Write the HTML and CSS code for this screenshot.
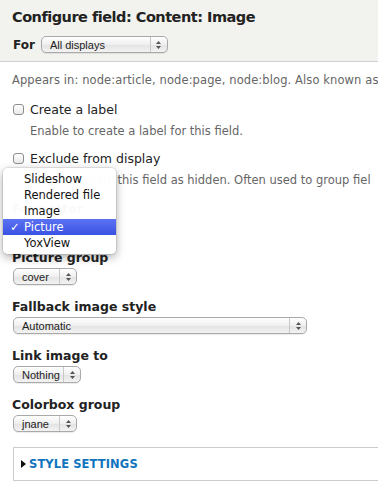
FILE: index.html
```html
<!DOCTYPE html>
<html>
<head>
<meta charset="utf-8">
<link rel="stylesheet" href="styles.css">
</head>
<body>
<div class="header">
  <h1 class="title">Configure field: Content: Image</h1>
  <div class="for-row">
    <span class="for-label">For</span>
    <div class="select sel-for"><span class="sel-text">All displays</span><span class="sel-arrows"><svg width="7" height="10" viewBox="0 0 7 10"><path d="M3.5 1 L6 4 H1 Z M3.5 9 L6 6 H1 Z" fill="#555"/></svg></span></div>
  </div>
</div>
<div class="content">
  <p class="appears">Appears in: node:article, node:page, node:blog. Also known as</p>
  <div class="check-item">
    <div class="check-row"><span class="checkbox"></span><span class="check-label">Create a label</span></div>
    <div class="desc">Enable to create a label for this field.</div>
  </div>
  <div class="check-item">
    <div class="check-row"><span class="checkbox"></span><span class="check-label">Exclude from display</span></div>
    <div class="desc">Check to mark this field as hidden. Often used to group fiel</div>
  </div>
  <div class="form-item first">
    <div class="label">Formatter</div>
    <div class="select sel-fmt"><span class="sel-text">Picture</span><span class="sel-arrows"><svg width="7" height="10" viewBox="0 0 7 10"><path d="M3.5 1 L6 4 H1 Z M3.5 9 L6 6 H1 Z" fill="#555"/></svg></span></div>
  </div>
  <div class="form-item">
    <div class="label">Picture group</div>
    <div class="select sel-cover"><span class="sel-text">cover</span><span class="sel-arrows"><svg width="7" height="10" viewBox="0 0 7 10"><path d="M3.5 1 L6 4 H1 Z M3.5 9 L6 6 H1 Z" fill="#555"/></svg></span></div>
  </div>
  <div class="form-item">
    <div class="label">Fallback image style</div>
    <div class="select sel-wide"><span class="sel-text">Automatic</span><span class="sel-arrows"><svg width="7" height="10" viewBox="0 0 7 10"><path d="M3.5 1 L6 4 H1 Z M3.5 9 L6 6 H1 Z" fill="#555"/></svg></span></div>
  </div>
  <div class="form-item">
    <div class="label">Link image to</div>
    <div class="select sel-nothing"><span class="sel-text">Nothing</span><span class="sel-arrows"><svg width="7" height="10" viewBox="0 0 7 10"><path d="M3.5 1 L6 4 H1 Z M3.5 9 L6 6 H1 Z" fill="#555"/></svg></span></div>
  </div>
  <div class="form-item">
    <div class="label">Colorbox group</div>
    <div class="select sel-cover"><span class="sel-text">jnane</span><span class="sel-arrows"><svg width="7" height="10" viewBox="0 0 7 10"><path d="M3.5 1 L6 4 H1 Z M3.5 9 L6 6 H1 Z" fill="#555"/></svg></span></div>
  </div>
  <div class="fieldset">
    <svg class="tri" width="5" height="8" viewBox="0 0 5 8"><path d="M0 0 L5 4 L0 8 Z" fill="#111"/></svg>
    <span class="fs-title">STYLE SETTINGS</span>
  </div>
  <ul class="popup">
    <li>Slideshow</li>
    <li>Rendered file</li>
    <li>Image</li>
    <li class="selected"><span class="check">✓</span>Picture</li>
    <li>YoxView</li>
  </ul>
</div>
</body>
</html>
```
FILE: styles.css
```css
html, body {
  margin: 0;
  padding: 0;
  background: #fff;
  font-family: "DejaVu Sans", "Noto Sans", sans-serif;
  overflow: hidden;
}
body {
  width: 378px;
  height: 489px;
  position: relative;
}
.header {
  background: #f2f2ee;
  border-bottom: 1px solid #cfcfcf;
  height: 62px;
  box-sizing: border-box;
  padding: 8px 12px 0;
}
.title {
  margin: 0;
  font-size: 14.5px;
  letter-spacing: -0.5px;
  font-weight: bold;
  color: #222;
  line-height: 18px;
}
.for-row {
  display: flex;
  align-items: center;
  margin-top: 10px;
  gap: 6px;
}
.for-label {
  font-size: 12px;
  font-weight: bold;
  color: #222;
  padding-left: 1px;
}
.select {
  display: flex;
  align-items: center;
  height: 17px;
  box-sizing: border-box;
  border: 1px solid #a9a9a9;
  border-radius: 5px;
  background: linear-gradient(#ffffff, #efefef 50%, #e2e2e2 51%, #f3f3f3);
  font-family: "Liberation Sans", Arial, sans-serif;
  font-size: 11px;
  color: #222;
  box-shadow: 0 1px 1px rgba(0,0,0,0.08);
}
.sel-text {
  flex: 1;
  padding-left: 8px;
  white-space: nowrap;
  overflow: hidden;
}
.sel-arrows {
  width: 16px;
  height: 100%;
  border-left: 1px solid #c8c8c8;
  display: flex;
  align-items: center;
  justify-content: center;
}
.sel-for { width: 127px; }
.sel-fmt { width: 100px; }
.sel-cover { width: 64px; }
.sel-nothing { width: 68px; }
.sel-wide { width: 294px; }
.content {
  padding: 0 0 0 12px;
}
.appears {
  margin: 10px 0 0;
  font-size: 11.5px;
  letter-spacing: 0.1px;
  line-height: 16px;
  color: #666;
  white-space: nowrap;
}
.check-item {
  margin-top: 13px;
}
.check-item + .check-item {
  margin-top: 11px;
}
.check-row {
  display: flex;
  align-items: center;
  height: 16px;
}
.checkbox {
  width: 11px;
  height: 11px;
  box-sizing: border-box;
  border: 1px solid #8e8e8e;
  border-radius: 3px;
  background: linear-gradient(#fff, #e9e9e9);
  margin-left: 1px;
  margin-right: 6px;
}
.check-label {
  font-size: 12.5px;
  color: #222;
}
.desc {
  margin-top: 6px;
  padding-left: 18px;
  font-size: 11.5px;
  line-height: 16px;
  color: #666;
  white-space: nowrap;
}
.form-item {
  margin-top: 14px;
}
.form-item.first {
  margin-top: 13px;
}
.label {
  font-size: 12.5px;
  font-weight: bold;
  color: #222;
  line-height: 16px;
  margin-bottom: 2px;
}
.form-item .select {
  margin-left: 1px;
}
.fieldset {
  margin-top: 15px;
  margin-left: 1px;
  height: 34px;
  box-sizing: border-box;
  border: 1px solid #cccccc;
  border-right: none;
  display: flex;
  align-items: center;
  padding-left: 7px;
  gap: 3px;
}
.fs-title {
  font-size: 11.5px;
  font-weight: bold;
  color: #0f74bd;
  letter-spacing: 0.1px;
}
.popup {
  position: absolute;
  left: 3px;
  top: 168px;
  width: 113px;
  margin: 0;
  padding: 3px 0;
  list-style: none;
  background: rgba(255,255,255,0.975);
  border-radius: 5px;
  box-shadow: 0 3px 10px rgba(0,0,0,0.35), 0 0 0 1px rgba(0,0,0,0.08);
  font-size: 11.5px;
  color: #111;
}
.popup li {
  height: 16px;
  line-height: 16px;
  padding-left: 21px;
  position: relative;
}
.popup li.selected {
  background: linear-gradient(#5b72f3, #3a52e2);
  color: #fff;
}
.popup .check {
  position: absolute;
  left: 7px;
  top: 0;
}
```
